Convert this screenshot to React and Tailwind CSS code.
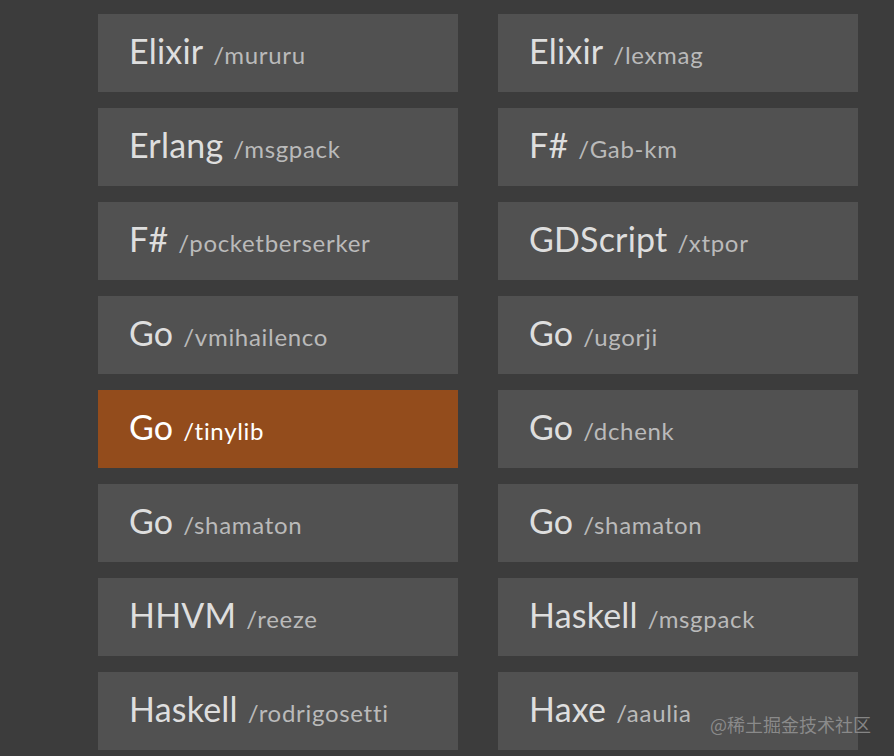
import React from "react";

const items = [
  ["Elixir", "/mururu"],
  ["Elixir", "/lexmag"],
  ["Erlang", "/msgpack"],
  ["F#", "/Gab-km"],
  ["F#", "/pocketberserker"],
  ["GDScript", "/xtpor"],
  ["Go", "/vmihailenco"],
  ["Go", "/ugorji"],
  ["Go", "/tinylib", true],
  ["Go", "/dchenk"],
  ["Go", "/shamaton"],
  ["Go", "/shamaton"],
  ["HHVM", "/reeze"],
  ["Haskell", "/msgpack"],
  ["Haskell", "/rodrigosetti"],
  ["Haxe", "/aaulia"],
];

export default function App() {
  return (
    <div className="relative w-[894px] h-[756px] overflow-hidden bg-[#3c3c3c] font-['Lato',sans-serif]">
      <div className="grid grid-cols-[360px_360px] gap-x-[40px] gap-y-[16px] pl-[98px] pt-[14px]">
        {items.map(([lang, repo, active], i) => (
          <div
            key={i}
            className={`h-[78px] flex items-center pl-[31px] pb-[5px] ${
              active ? "bg-[#934c1c]" : "bg-[#515151]"
            }`}
          >
            <div className="flex items-baseline">
              <span
                className={`text-[34px] leading-none tracking-[0.2px] ${
                  active ? "text-white" : "text-[#dedede]"
                }`}
              >
                {lang}
              </span>
              <span
                className={`ml-[10px] text-[24px] leading-none tracking-[0.7px] ${
                  active ? "text-white" : "text-[#bababa]"
                }`}
              >
                {repo}
              </span>
            </div>
          </div>
        ))}
      </div>
      <div className="absolute left-[710px] top-[711px] text-[18px] text-[#9a9a9a]/80 font-['Noto_Sans_CJK_SC',sans-serif]">
        @稀土掘金技术社区
      </div>
    </div>
  );
}
